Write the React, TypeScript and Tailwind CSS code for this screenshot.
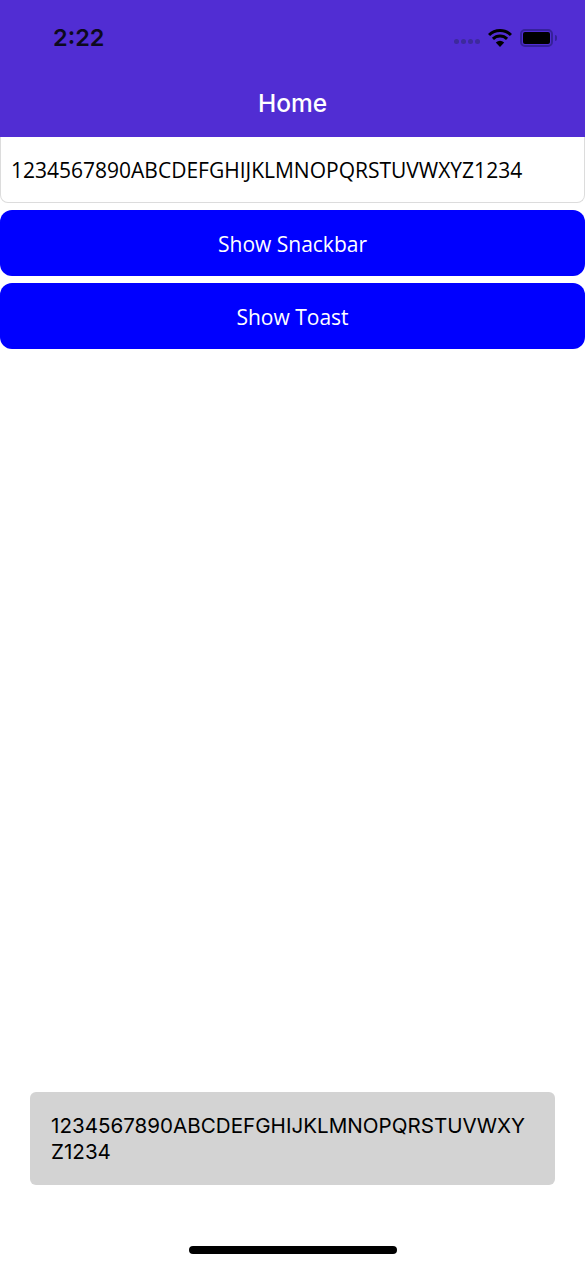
const openSans = { fontFamily: '"Open Sans", sans-serif' };
const inter = { fontFamily: "Inter, sans-serif" };

function StatusIcons() {
  return (
    <div className="flex items-center gap-[8px]">
      <div className="flex items-center gap-[2px] mt-[8px]">
        <span className="w-[5px] h-[5px] rounded-full bg-[#3d2a9c]" />
        <span className="w-[5px] h-[5px] rounded-full bg-[#3d2a9c]" />
        <span className="w-[5px] h-[5px] rounded-full bg-[#3d2a9c]" />
        <span className="w-[5px] h-[5px] rounded-full bg-[#3d2a9c]" />
      </div>
      <svg width="24" height="18" viewBox="0 0 24 18" fill="none" stroke="black" strokeWidth="3">
        <path d="M1.040 6.040A15.500 15.500 0 0 1 22.960 6.040" />
        <path d="M4.930 9.930A10 10 0 0 1 19.070 9.930" />
        <path d="M12 18L7.800 13.500Q12 10 16.200 13.500Z" fill="black" stroke="none" />
      </svg>
      <div className="flex items-center gap-[2px]">
        <div className="w-[33px] h-[18px] rounded-[5px] border-2 border-[#35219a] p-[1px]">
          <div className="w-full h-full rounded-[2px] bg-black" />
        </div>
        <div className="w-[2px] h-[6px] rounded-r-sm bg-[#35219a]" />
      </div>
    </div>
  );
}

export default function App() {
  return (
    <div className="relative w-[585px] h-[1266px] bg-white overflow-hidden" style={openSans}>
      <header className="bg-[#512dd3] h-[137px] flex flex-col">
        <div className="h-[75px] pl-[53px] pr-[28px] flex items-center justify-between">
          <span className="text-[23.5px] font-semibold text-[#0d0a1e]" style={inter}>2:22</span>
          <StatusIcons />
        </div>
        <div className="h-[57px] flex items-center justify-center">
          <span className="text-[24.5px] font-medium text-white" style={inter}>Home</span>
        </div>
      </header>
      <div className="flex flex-col gap-[7.2px]">
        <div className="h-[66px] pt-[3px] border border-t-0 border-[#dcdcdc] rounded-b-[8px] flex items-center px-[10px] text-[21px] text-black">
          1234567890ABCDEFGHIJKLMNOPQRSTUVWXYZ1234
        </div>
        <button className="h-[66px] pt-[3px] bg-[#0000ff] text-white text-[21px] rounded-[12px]">Show Snackbar</button>
        <button className="h-[66px] pt-[3px] bg-[#0000ff] text-white text-[21px] rounded-[12px]">Show Toast</button>
      </div>
      <div className="absolute left-[30px] top-[1092px] w-[525px] h-[93px] bg-[#d3d3d3] rounded-[6px] px-[21px] py-[21px] text-[20.6px] leading-[26px] text-black break-all" style={inter}>
        1234567890ABCDEFGHIJKLMNOPQRSTUVWXYZ1234
      </div>
      <div className="absolute left-[189px] top-[1246px] w-[208px] h-[8px] bg-black rounded-full" />
    </div>
  );
}
